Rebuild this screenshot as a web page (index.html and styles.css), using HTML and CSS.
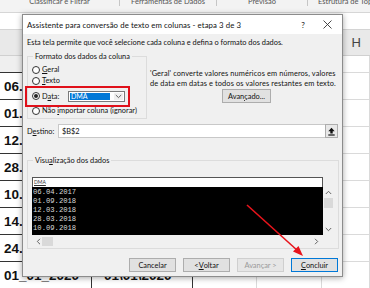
FILE: index.html
```html
<!DOCTYPE html>
<html lang="pt">
<head>
<meta charset="utf-8">
<title>Assistente</title>
<link rel="stylesheet" href="styles.css">
</head>
<body>
<div class="screen">
  <div class="ribbon">
    <span class="grp g1">Classificar e Filtrar</span>
    <span class="grp g2">Ferramentas de Dados</span>
    <span class="grp g3">Previsão</span>
    <span class="grp g4">Estrutura de Tópicos</span>
  </div>
  <div class="fbar"></div>
  <div class="sheet">
    <div class="colhdr"><span class="colname">H</span></div>
    <div class="row first"><div class="c a grey"></div><div class="c b"></div><div class="c"></div><div class="c"></div><div class="c"></div></div>
    <div class="row"><div class="c a">06.04.2017</div><div class="c b"></div><div class="c"></div><div class="c"></div><div class="c"></div></div>
    <div class="row"><div class="c a">01.09.2018</div><div class="c b"></div><div class="c"></div><div class="c"></div><div class="c"></div></div>
    <div class="row"><div class="c a">12.03.2018</div><div class="c b"></div><div class="c"></div><div class="c"></div><div class="c"></div></div>
    <div class="row"><div class="c a">28.03.2018</div><div class="c b"></div><div class="c"></div><div class="c"></div><div class="c"></div></div>
    <div class="row"><div class="c a">10.09.2018</div><div class="c b"></div><div class="c"></div><div class="c"></div><div class="c"></div></div>
    <div class="row"><div class="c a">14.09.2018</div><div class="c b"></div><div class="c"></div><div class="c"></div><div class="c"></div></div>
    <div class="row"><div class="c a">24.09.2018</div><div class="c b"></div><div class="c"></div><div class="c"></div><div class="c"></div></div>
    <div class="row"><div class="c a">01_01_2020</div><div class="c b">01\01\2020</div><div class="c"></div><div class="c"></div><div class="c"></div></div>
  </div>

  <div class="dialog">
    <div class="titlebar">
      <span class="title">Assistente para conversão de texto em colunas - etapa 3 de 3</span>
      <span class="help">?</span>
      <span class="close"><svg width="9" height="9" viewBox="0 0 9 9"><path d="M0.5 0.5L8.5 8.5M8.5 0.5L0.5 8.5" stroke="#333" stroke-width="0.9" fill="none"/></svg></span>
    </div>
    <div class="body">
      <p class="intro">Esta tela permite que você selecione cada coluna e defina o formato dos dados.</p>
      <div class="mid">
        <fieldset class="fmt">
          <legend>Formato dos dados da coluna</legend>
          <div class="opt"><span class="radio"></span><span><u>G</u>eral</span></div>
          <div class="opt"><span class="radio"></span><span><u>T</u>exto</span></div>
          <div class="opt data"><span class="radio on"></span><span class="dlabel">D<u>a</u>ta:</span>
            <span class="select"><span class="sel">DMA</span><span class="dd"><svg width="7" height="5" viewBox="0 0 7 5"><path d="M0.8 1L3.5 3.6L6.2 1" stroke="#555" stroke-width="0.9" fill="none"/></svg></span></span>
          </div>
          <div class="opt"><span class="radio"></span><span>Não <u>i</u>mportar coluna (ignorar)</span></div>
        </fieldset>
        <div class="info">
          <p>'Geral' converte valores numéricos em números, valores<br>de data em datas e todos os valores restantes em texto.</p>
          <span class="btn adv">Avan<u>ç</u>ado...</span>
        </div>
      </div>
      <div class="dest">
        <span class="dlab">D<u>e</u>stino:</span>
        <span class="input">$B$2</span>
        <span class="pick"><svg width="9" height="9" viewBox="0 0 9 9"><path d="M4.5 0.8L1.3 4.2H3.3V6.6H5.7V4.2H7.7Z" fill="#111"/><rect x="1.3" y="7.4" width="6.4" height="1.2" fill="#111"/></svg></span>
      </div>
      <fieldset class="prev">
        <legend>Visu<u>a</u>lização dos dados</legend>
        <div class="pv">
          <div class="pvmain">
            <div class="pvhead"><u>DMA</u></div>
            <div class="pvdata">
              <div class="ln">06.04.2017</div>
              <div class="ln">01.09.2018</div>
              <div class="ln">12.03.2018</div>
              <div class="ln">28.03.2018</div>
              <div class="ln">10.09.2018</div>
            </div>
          </div>
          <div class="vscroll">
            <span class="arr up"><svg width="7" height="5" viewBox="0 0 7 5"><path d="M0.8 4L3.5 1.3L6.2 4" stroke="#555" stroke-width="0.9" fill="none"/></svg></span>
            <span class="vthumb"></span>
            <span class="arr down"><svg width="7" height="5" viewBox="0 0 7 5"><path d="M0.8 1L3.5 3.7L6.2 1" stroke="#555" stroke-width="0.9" fill="none"/></svg></span>
          </div>
        </div>
        <div class="hscroll">
          <span class="harr"><svg width="5" height="7" viewBox="0 0 5 7"><path d="M4 0.8L1.3 3.5L4 6.2" stroke="#555" stroke-width="0.9" fill="none"/></svg></span>
          <span class="hthumb"></span>
          <span class="harr right"><svg width="5" height="7" viewBox="0 0 5 7"><path d="M1 0.8L3.7 3.5L1 6.2" stroke="#555" stroke-width="0.9" fill="none"/></svg></span>
        </div>
      </fieldset>
      <div class="btns">
        <span class="btn">Cancelar</span>
        <span class="btn">&lt; <u>V</u>oltar</span>
        <span class="btn dis">Avançar &gt;</span>
        <span class="btn def"><u>C</u>oncluir</span>
      </div>
    </div>
    <div class="redbox"></div>
  </div>

  <svg class="arrow" width="370" height="288" viewBox="0 0 370 288">
    <line x1="247" y1="205" x2="298" y2="251" stroke="#e8141c" stroke-width="1.6"/>
    <path d="M303 256L293 251.5L298.5 246Z" fill="#e8141c"/>
  </svg>
</div>
</body>
</html>
```

FILE: styles.css
```css
* { box-sizing: border-box; margin: 0; padding: 0; }
body { width: 370px; height: 288px; overflow: hidden; background: #fff; font-family: Lato, "Noto Sans", sans-serif; }
.screen { position: relative; width: 370px; height: 288px; overflow: hidden; background: #fff; }

.ribbon { height: 13px; background: #f3f3f3; border-bottom: 1px solid #d6d6d6; display: flex; font-size: 7.5px; color: #555; line-height: 9px; overflow: hidden; }
.grp { display: block; text-align: center; margin-top: -3px; height: 9px; border-right: 1px solid #c6c6c6; white-space: nowrap; overflow: hidden; }
.g1 { width: 120px; }
.g2 { width: 97px; }
.g3 { width: 91px; }
.g4 { flex: 1; border-right: 0; text-align: left; padding-left: 10px; }

.fbar { height: 17px; background: #fff; border-bottom: 1px solid #d4d4d4; }

.sheet { display: flex; flex-direction: column; }
.colhdr { height: 26px; background: #e9e9e9; border-bottom: 1px solid #d0d0d0; display: flex; justify-content: flex-end; align-items: center; padding-right: 9px; }
.colname { font-family: "Liberation Sans", sans-serif; font-size: 13px; color: #444; }
.row { display: grid; grid-template-columns: 92px 101px 64px 65px 48px; height: 27px; }
.row.first { height: 17px; }
.c { border-right: 1px solid #dadada; border-bottom: 1px solid #dadada; font-family: "Liberation Sans", sans-serif; font-weight: bold; font-size: 13.5px; color: #111; display: flex; align-items: center; padding-left: 4px; white-space: nowrap; overflow: hidden; }
.c.a, .c.b { border-color: #333; }
.c.grey { background: #efefef; }
.c.b { padding-left: 12px; }

.dialog { position: absolute; left: 22px; top: 14px; width: 321px; height: 263px; background: #f0f0f0; border: 1px solid #8c8c8c; box-shadow: 0 1px 6px rgba(0,0,0,0.35); display: flex; flex-direction: column; font-size: 7.4px; color: #111; }
.titlebar { height: 19px; background: #fff; display: flex; align-items: center; padding-left: 4px; }
.title { flex: 1; font-size: 7.8px; letter-spacing: 0.08px; color: #111; }
.help { width: 12px; text-align: center; font-size: 8px; margin-right: 12px; }
.close { width: 12px; display: flex; justify-content: center; margin-right: 9px; }

.body { padding: 4px 4px 0 4px; display: flex; flex-direction: column; }
.intro { line-height: 10px; height: 10px; white-space: nowrap; }

.mid { margin-top: 4px; height: 67px; display: flex; }
fieldset { border: 1px solid #dcdcdc; border-radius: 0; }
legend { line-height: 9px; padding: 0 2px; margin-left: 1px; }
.fmt { width: 120px; height: 67px; padding: 3px 0 0 4px; }
.opt { display: flex; align-items: center; height: 11px; white-space: nowrap; gap: 2px; }
.opt.data { height: 18px; margin: 1px 0 0 0; }
.radio { width: 8px; height: 8px; border: 1px solid #333; border-radius: 50%; background: #fff; display: flex; align-items: center; justify-content: center; }
.radio.on::after { content: ""; width: 4px; height: 4px; border-radius: 50%; background: #222; }
.dlabel { width: 24px; }
.select { display: flex; width: 57px; height: 11px; border: 1px solid #7a7a7a; background: #fff; padding: 1px; }
.sel { flex: 1; background: #0078d7; color: #fff; line-height: 7px; padding-left: 1px; font-size: 7px; margin-right: 4px; }
.dd { width: 9px; display: flex; align-items: center; justify-content: center; background: #f0f0f0; }

.info { margin-left: 3px; padding-top: 17px; display: flex; flex-direction: column; align-items: flex-start; }
.info p { line-height: 10px; white-space: nowrap; letter-spacing: 0.12px; }

.btn { display: flex; align-items: center; justify-content: center; background: #e1e1e1; border: 1px solid #adadad; color: #111; height: 14px; white-space: nowrap; }
.adv { width: 49px; margin-left: 72px; }

.dest { margin-top: 5px; height: 14px; display: flex; align-items: center; }
.dlab { width: 31px; }
.input { flex: 1; height: 14px; background: #fff; border: 1px solid #c8c8c8; border-right: 0; display: flex; align-items: center; padding-left: 3px; }
.pick { width: 13px; height: 14px; border: 1px solid #adadad; background: #e8e8e8; display: flex; align-items: center; justify-content: center; }

.prev { margin-top: 18px; height: 93px; padding: 12px 4px 0 4px; }
.pv { display: flex; height: 58px; }
.pvmain { width: 291px; display: flex; flex-direction: column; }
.pvhead { height: 10px; background: #fff; border: 1px solid #555; border-bottom: 0; font-size: 5px; line-height: 9px; padding-left: 1px; color: #333; }
.pvdata { height: 48px; background: #000; color: #d8d8d8; font-family: "Liberation Mono", monospace; font-size: 7.2px; padding: 1px 0 0 1px; display: flex; flex-direction: column; }
.ln { height: 9px; line-height: 9px; overflow: hidden; }
.vscroll { width: 11px; margin-top: 10px; display: flex; flex-direction: column; align-items: center; }
.arr { height: 11px; display: flex; align-items: center; }
.vthumb { width: 9px; height: 10px; background: #d9d9d9; }
.arr.down { margin-top: auto; }
.hscroll { height: 12px; width: 291px; display: flex; align-items: center; padding-left: 4px; }
.harr { width: 6px; display: flex; align-items: center; }
.hthumb { width: 11px; height: 9px; background: #d9d9d9; }
.harr.right { margin-left: auto; margin-right: 3px; }

.btns { margin-top: 9px; display: flex; justify-content: flex-end; gap: 7px; padding-right: 0; }
.btns .btn { width: 47px; }
.btns .btn.dis { color: #9a9a9a; background: #e6e6e6; border-color: #cfcfcf; }
.btns .btn.def { border: 1.5px solid #0078d7; }

.redbox { position: absolute; left: 2px; top: 71px; width: 105px; height: 21px; border: 2px solid #e0101a; }

.arrow { position: absolute; left: 0; top: 0; pointer-events: none; }
```
